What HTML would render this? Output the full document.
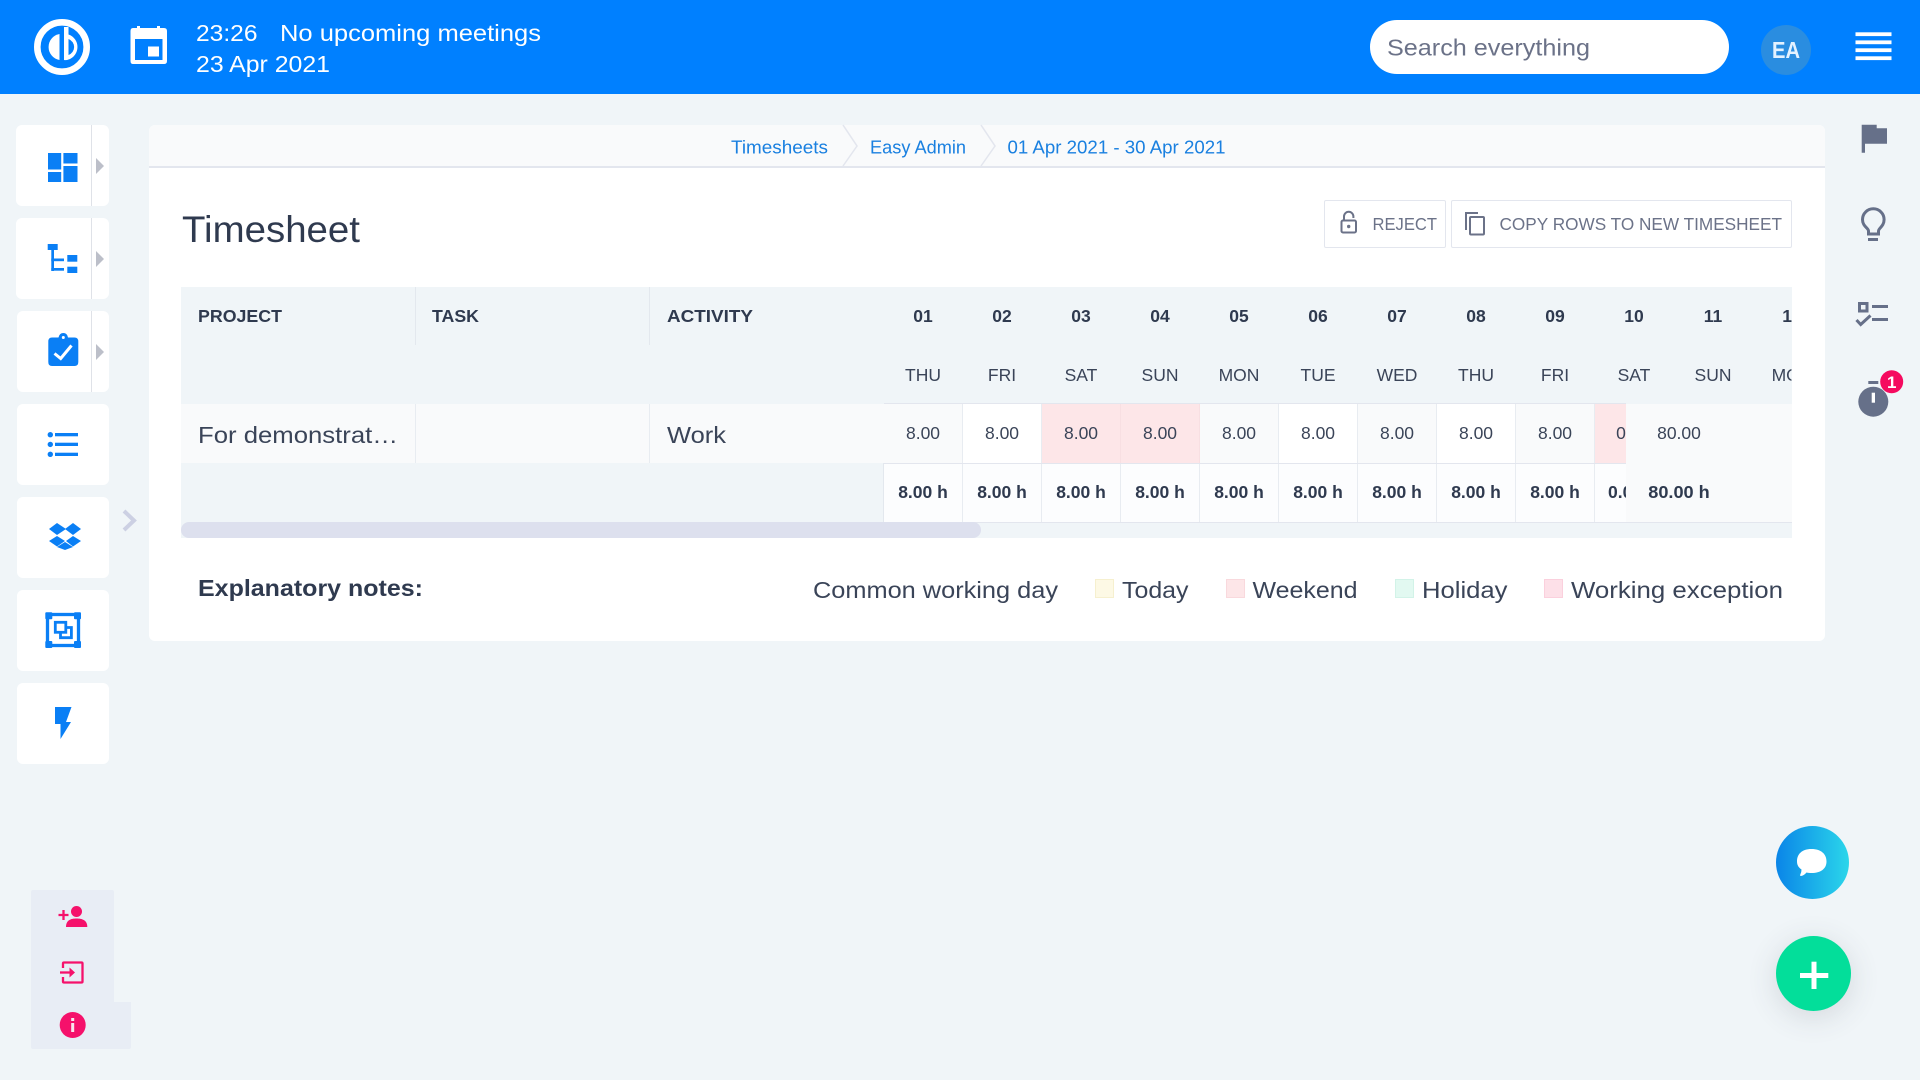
<!DOCTYPE html>
<html lang="en">
<head>
<meta charset="utf-8">
<title>Timesheet</title>
<style>
html,body{margin:0;padding:0;width:1920px;height:1080px;overflow:hidden;background:#f0f5f8;}
.b{position:absolute;box-sizing:border-box;}
svg{position:absolute;left:0;top:0;}
text{font-family:"Liberation Sans",sans-serif;}
.w{fill:#fff;font-size:23.5px;}
.crumb{fill:#1a80e0;font-size:18px;}
.btn{fill:#6b7288;font-size:17.5px;}
.th{fill:#2f3a4f;font-size:17.5px;font-weight:700;}
.dn{fill:#2f3a4f;font-size:17.5px;font-weight:700;text-anchor:middle;}
.dd{fill:#3a4458;font-size:17.5px;text-anchor:middle;}
.v{fill:#3a4458;font-size:17.5px;text-anchor:middle;}
.t{fill:#2f3a4f;font-size:17.5px;font-weight:700;text-anchor:middle;}
.big{fill:#3a4458;font-size:23.5px;}
</style>
</head>
<body>
<!-- Header -->
<div class="b" style="left:0;top:0;width:1920px;height:94px;background:#0080ff;"></div>
<div class="b" style="left:1370px;top:20px;width:359px;height:54px;background:#fff;border-radius:27px;"></div>
<div class="b" style="left:1761px;top:25px;width:50px;height:50px;background:#2a8de0;border-radius:50%;"></div>

<!-- Left tiles -->
<div class="b" style="left:16px;top:125px;width:93px;height:81px;background:#fff;border-radius:6px;"></div>
<div class="b" style="left:16px;top:218px;width:93px;height:81px;background:#fff;border-radius:6px;"></div>
<div class="b" style="left:17px;top:311px;width:92px;height:81px;background:#fff;border-radius:6px;"></div>
<div class="b" style="left:17px;top:404px;width:92px;height:81px;background:#fff;border-radius:6px;"></div>
<div class="b" style="left:17px;top:497px;width:92px;height:81px;background:#fff;border-radius:6px;"></div>
<div class="b" style="left:17px;top:590px;width:92px;height:81px;background:#fff;border-radius:6px;"></div>
<div class="b" style="left:17px;top:683px;width:92px;height:81px;background:#fff;border-radius:6px;"></div>
<div class="b" style="left:91px;top:125px;width:1px;height:81px;background:#dfe2e8;"></div>
<div class="b" style="left:91px;top:218px;width:1px;height:81px;background:#dfe2e8;"></div>
<div class="b" style="left:91px;top:311px;width:1px;height:81px;background:#dfe2e8;"></div>

<!-- Bottom-left panel -->
<div class="b" style="left:31px;top:890px;width:83px;height:112px;background:#e8edf5;border-radius:2px 2px 0 0;"></div>
<div class="b" style="left:31px;top:1002px;width:100px;height:47px;background:#e8edf5;border-radius:0 0 2px 2px;"></div>

<!-- Main card -->
<div class="b" style="left:148.5px;top:125px;width:1676px;height:516px;background:#fff;border-radius:6px;"></div>
<div class="b" style="left:148.5px;top:125px;width:1676px;height:43px;background:#f9fafb;border-bottom:2px solid #e3e6ee;border-radius:6px 6px 0 0;"></div>

<!-- Buttons -->
<div class="b" style="left:1324px;top:200px;width:122px;height:48px;background:#fff;border:1px solid #e3e6ee;border-radius:2px;"></div>
<div class="b" style="left:1451px;top:200px;width:341px;height:48px;background:#fff;border:1px solid #e3e6ee;border-radius:2px;"></div>

<!-- Table -->
<div class="b" style="left:181px;top:287px;width:1611px;height:251px;background:#f0f5f8;"></div>
<div class="b" style="left:181px;top:404px;width:703px;height:59px;background:#f9fafb;"></div>
<div class="b" style="left:415px;top:287px;width:1px;height:58px;background:#e3e8ee;"></div>
<div class="b" style="left:649px;top:287px;width:1px;height:58px;background:#e3e8ee;"></div>
<div class="b" style="left:415px;top:404px;width:1px;height:59px;background:#e8ecf1;"></div>
<div class="b" style="left:649px;top:404px;width:1px;height:59px;background:#e8ecf1;"></div>

<!-- Row cells -->
<div class="b" style="left:884px;top:404px;width:79px;height:59px;background:#f9fafb;border-right:1px solid #e8ecf1;"></div>
<div class="b" style="left:963px;top:404px;width:79px;height:59px;background:#fff;border-right:1px solid #e8ecf1;"></div>
<div class="b" style="left:1042px;top:404px;width:79px;height:59px;background:#fde6e8;border-right:1px solid #f8dfe2;"></div>
<div class="b" style="left:1121px;top:404px;width:79px;height:59px;background:#fde6e8;border-right:1px solid #f8dfe2;"></div>
<div class="b" style="left:1200px;top:404px;width:79px;height:59px;background:#f9fafb;border-right:1px solid #e8ecf1;"></div>
<div class="b" style="left:1279px;top:404px;width:79px;height:59px;background:#fff;border-right:1px solid #e8ecf1;"></div>
<div class="b" style="left:1358px;top:404px;width:79px;height:59px;background:#f9fafb;border-right:1px solid #e8ecf1;"></div>
<div class="b" style="left:1437px;top:404px;width:79px;height:59px;background:#fff;border-right:1px solid #e8ecf1;"></div>
<div class="b" style="left:1516px;top:404px;width:79px;height:59px;background:#f9fafb;border-right:1px solid #e8ecf1;"></div>
<div class="b" style="left:1595px;top:404px;width:31px;height:59px;background:#fde6e8;"></div>
<div class="b" style="left:1626px;top:404px;width:166px;height:59px;background:#f9fafb;"></div>
<!-- Totals -->
<div class="b" style="left:884px;top:463px;width:742px;height:59px;background:#fcfdfe;"></div>
<div class="b" style="left:1626px;top:463px;width:166px;height:59px;background:#f9fafb;"></div>
<div class="b" style="left:883px;top:463px;width:1px;height:59px;background:#e3e8ee;"></div>
<div class="b" style="left:962px;top:463px;width:1px;height:59px;background:#e8ecf1;"></div>
<div class="b" style="left:1041px;top:463px;width:1px;height:59px;background:#e8ecf1;"></div>
<div class="b" style="left:1120px;top:463px;width:1px;height:59px;background:#e8ecf1;"></div>
<div class="b" style="left:1199px;top:463px;width:1px;height:59px;background:#e8ecf1;"></div>
<div class="b" style="left:1278px;top:463px;width:1px;height:59px;background:#e8ecf1;"></div>
<div class="b" style="left:1357px;top:463px;width:1px;height:59px;background:#e8ecf1;"></div>
<div class="b" style="left:1436px;top:463px;width:1px;height:59px;background:#e8ecf1;"></div>
<div class="b" style="left:1515px;top:463px;width:1px;height:59px;background:#e8ecf1;"></div>
<div class="b" style="left:1594px;top:463px;width:1px;height:59px;background:#e8ecf1;"></div>
<div class="b" style="left:884px;top:403px;width:742px;height:1px;background:#e3e6ee;"></div>
<div class="b" style="left:884px;top:463px;width:742px;height:1px;background:#e3e6ee;"></div>
<div class="b" style="left:883px;top:522px;width:909px;height:1px;background:#e3e6ee;"></div>
<!-- Scrollbar -->
<div class="b" style="left:181px;top:522px;width:800px;height:16px;background:#dde0ee;border-radius:8px;"></div>

<!-- Legend swatches -->
<div class="b" style="left:1095px;top:579px;width:19px;height:19px;background:#fdf9e5;border:1px solid #f6f0cf;"></div>
<div class="b" style="left:1226px;top:579px;width:19px;height:19px;background:#fde6e8;border:1px solid #f9d9dd;"></div>
<div class="b" style="left:1395px;top:579px;width:19px;height:19px;background:#e2f9f1;border:1px solid #d2f3e8;"></div>
<div class="b" style="left:1544px;top:579px;width:19px;height:19px;background:#fde0e8;border:1px solid #fbd0dd;"></div>

<!-- FABs -->
<div class="b" style="left:1775.5px;top:825.5px;width:73px;height:73px;border-radius:50%;background:linear-gradient(90deg,#0a85e8,#2bd6ea);"></div>
<div class="b" style="left:1776px;top:936px;width:75px;height:75px;border-radius:50%;background:#03de9a;box-shadow:0 6px 30px rgba(60,70,80,.16);"></div>

<svg width="1920" height="1080" viewBox="0 0 1920 1080" xmlns="http://www.w3.org/2000/svg">
  <!-- Header icons -->
  <circle cx="62" cy="47" r="24.7" fill="none" stroke="#fff" stroke-width="6.6"/>
  <path d="M59.500 34 A13.200 13.200 0 0 0 59.500 60 Z" fill="#fff"/>
  <path d="M64 27 H68.500 V34.500 A13.200 13.200 0 0 1 68.500 59.500 Q66.500 60.500 64 60 Z" fill="#fff"/>
  <path d="M68.500 39 A8.500 8.500 0 0 1 68.500 55 Z" fill="#0080ff"/>
  <path d="M133 28 H137 V26 H140 V28 H157 V26 H160 V28 H164 Q167 28 167 31 V61 Q167 64 164 64 H133 Q130.500 64 130.500 61 V31 Q130.500 28 133 28 Z M135 39 V60 H162.500 V39 Z" fill="#fff" fill-rule="evenodd"/>
  <rect x="148" y="46.500" width="11" height="10" fill="#fff"/>
  <text class="w" x="196" y="41" textLength="61.500" lengthAdjust="spacingAndGlyphs">23:26</text>
  <text class="w" x="280" y="41" textLength="261" lengthAdjust="spacingAndGlyphs">No upcoming meetings</text>
  <text class="w" x="196" y="72" textLength="134" lengthAdjust="spacingAndGlyphs">23 Apr 2021</text>
  <text x="1387" y="55.500" textLength="203" lengthAdjust="spacingAndGlyphs" style="fill:#6b7288;font-size:23.500px">Search everything</text>
  <text x="1772" y="58" textLength="28" lengthAdjust="spacingAndGlyphs" style="fill:#e4f2ff;font-size:23px;font-weight:700">EA</text>
  <rect x="1855.500" y="32.300" width="36" height="3.800" fill="#fff"/>
  <rect x="1855.500" y="40.400" width="36" height="3.800" fill="#fff"/>
  <rect x="1855.500" y="48.300" width="36" height="3.800" fill="#fff"/>
  <rect x="1855.500" y="56.300" width="36" height="3.800" fill="#fff"/>

  <!-- Tile arrows -->
  <path d="M96 158 L104 166 L96 174 Z" fill="#bcbfc9"/>
  <path d="M96 251 L104 259 L96 267 Z" fill="#bcbfc9"/>
  <path d="M96 344 L104 352 L96 360 Z" fill="#bcbfc9"/>

  <!-- Dashboard -->
  <g fill="#0a7ff5">
    <rect x="48" y="153" width="13.200" height="16.500"/>
    <rect x="48" y="172" width="13.200" height="10"/>
    <rect x="63.400" y="153" width="14.100" height="10.500"/>
    <rect x="63.400" y="166" width="14.100" height="16"/>
  </g>
  <!-- Tree -->
  <g fill="#0a7ff5">
    <rect x="47.700" y="244" width="10" height="6"/>
    <rect x="51.300" y="250" width="2.700" height="21"/>
    <rect x="51.300" y="258.500" width="12.700" height="2.700"/>
    <rect x="51.300" y="268" width="12.700" height="2.700"/>
    <rect x="67.300" y="255" width="10" height="6.700"/>
    <rect x="67.300" y="266.700" width="10" height="6.300"/>
  </g>
  <!-- Clipboard -->
  <path d="M52 337.500 H58.500 Q59.500 333 63.300 333 Q67.200 333 68 337.500 H74.500 Q78.300 337.500 78.300 341.500 V362 Q78.300 366 74.500 366 H52 Q48.300 366 48.300 362 V341.500 Q48.300 337.500 52 337.500 Z" fill="#0a7ff5"/>
  <circle cx="63.300" cy="337.500" r="1.500" fill="#fff"/>
  <path d="M54.500 353.500 L60.700 358.500 L71.500 345.500" fill="none" stroke="#fff" stroke-width="3"/>
  <!-- List -->
  <g fill="#0a7ff5">
    <circle cx="50.300" cy="434.700" r="2.700"/><circle cx="50.300" cy="444.400" r="2.700"/><circle cx="50.300" cy="454.300" r="2.700"/>
    <rect x="55" y="433" width="23" height="3.300"/><rect x="55" y="442.700" width="23" height="3.300"/><rect x="55" y="452.700" width="23" height="3.300"/>
  </g>
  <!-- Dropbox -->
  <g fill="#0a7ff5">
    <path d="M57 523 L66 529 L57 535 L49 529 Z"/>
    <path d="M73 523 L81 529 L73 535 L65 529 Z"/>
    <path d="M57 536 L65 541 L57 546.500 L49 541 Z"/>
    <path d="M73 536 L81 541 L73 546.500 L66 541 Z"/>
    <path d="M65 542 L73 547 L65 550 L57 547 Z"/>
  </g>
  <!-- Box select -->
  <g fill="none" stroke="#0a7ff5">
    <rect x="47.500" y="614.500" width="31" height="31" stroke-width="3.300"/>
    <rect x="55.300" y="622.300" width="10.500" height="10" stroke-width="2.800"/>
    <path d="M65.800 627.500 H71.400 V637.700 H60.500 V632.300" stroke-width="2.800"/>
  </g>
  <g fill="#0a7ff5">
    <rect x="45.300" y="612.300" width="7" height="7" rx="1"/><rect x="74" y="612.300" width="7" height="7" rx="1"/>
    <rect x="45.300" y="641" width="7" height="7" rx="1"/><rect x="74" y="641" width="7" height="7" rx="1"/>
  </g>
  <!-- Bolt -->
  <path d="M55 707 H71.500 L66 722 H71 L60.500 739 V724 H55 Z" fill="#0a7ff5"/>
  <!-- Chevron -->
  <path d="M124 511 L134 520.500 L124 530" fill="none" stroke="#ccd0e3" stroke-width="4"/>

  <!-- Breadcrumbs -->
  <path d="M843 125 L857 146 L843 166" fill="none" stroke="#e3e6ee" stroke-width="1.500"/>
  <path d="M981 125 L995 146 L981 166" fill="none" stroke="#e3e6ee" stroke-width="1.500"/>
  <text class="crumb" x="731" y="153.500" textLength="97" lengthAdjust="spacingAndGlyphs">Timesheets</text>
  <text class="crumb" x="870" y="153.500" textLength="96" lengthAdjust="spacingAndGlyphs">Easy Admin</text>
  <text class="crumb" x="1007.500" y="153.500" textLength="218" lengthAdjust="spacingAndGlyphs">01 Apr 2021 - 30 Apr 2021</text>

  <!-- Title -->
  <text x="182" y="242" textLength="178" lengthAdjust="spacingAndGlyphs" style="fill:#2f3a4f;font-size:37px">Timesheet</text>

  <!-- Buttons -->
  <rect x="1341.500" y="220.500" width="14.500" height="12" rx="1.500" fill="none" stroke="#6b7288" stroke-width="2"/>
  <path d="M1344 220.500 V216.500 A4.700 4.700 0 0 1 1353.400 216.500 V218" fill="none" stroke="#6b7288" stroke-width="2"/>
  <circle cx="1348.700" cy="226.500" r="1.700" fill="#6b7288"/>
  <text class="btn" x="1372.500" y="230" textLength="64.500" lengthAdjust="spacingAndGlyphs">REJECT</text>
  <path d="M1466 230 V213 H1478" fill="none" stroke="#6b7288" stroke-width="2"/>
  <rect x="1470" y="217" width="14" height="17.500" rx="1" fill="none" stroke="#6b7288" stroke-width="2"/>
  <text class="btn" x="1499.500" y="230" textLength="282.500" lengthAdjust="spacingAndGlyphs">COPY ROWS TO NEW TIMESHEET</text>

  <!-- Table header -->
  <text class="th" x="198" y="322" textLength="84" lengthAdjust="spacingAndGlyphs">PROJECT</text>
  <text class="th" x="432" y="322" textLength="47" lengthAdjust="spacingAndGlyphs">TASK</text>
  <text class="th" x="667" y="322" textLength="86" lengthAdjust="spacingAndGlyphs">ACTIVITY</text>

  <text class="dn" x="923" y="322">01</text><text class="dn" x="1002" y="322">02</text><text class="dn" x="1081" y="322">03</text><text class="dn" x="1160" y="322">04</text><text class="dn" x="1239" y="322">05</text><text class="dn" x="1318" y="322">06</text><text class="dn" x="1397" y="322">07</text><text class="dn" x="1476" y="322">08</text><text class="dn" x="1555" y="322">09</text><text class="dn" x="1634" y="322">10</text><text class="dn" x="1713" y="322">11</text>
  <text class="dd" x="923" y="381">THU</text><text class="dd" x="1002" y="381">FRI</text><text class="dd" x="1081" y="381">SAT</text><text class="dd" x="1160" y="381">SUN</text><text class="dd" x="1239" y="381">MON</text><text class="dd" x="1318" y="381">TUE</text><text class="dd" x="1397" y="381">WED</text><text class="dd" x="1476" y="381">THU</text><text class="dd" x="1555" y="381">FRI</text><text class="dd" x="1634" y="381">SAT</text><text class="dd" x="1713" y="381">SUN</text>
  <svg x="1770" y="287" width="21.500" height="117" viewBox="1770 287 21.500 117" overflow="hidden">
    <text class="dn" x="1792" y="322">12</text>
    <text class="dd" x="1792" y="381">MON</text>
  </svg>

  <!-- Rows -->
  <text class="big" x="198" y="443" textLength="200" lengthAdjust="spacingAndGlyphs">For demonstrat…</text>
  <text class="big" x="667" y="443" textLength="59" lengthAdjust="spacingAndGlyphs">Work</text>

  <text class="v" x="923" y="439">8.00</text><text class="v" x="1002" y="439">8.00</text><text class="v" x="1081" y="439">8.00</text><text class="v" x="1160" y="439">8.00</text><text class="v" x="1239" y="439">8.00</text><text class="v" x="1318" y="439">8.00</text><text class="v" x="1397" y="439">8.00</text><text class="v" x="1476" y="439">8.00</text><text class="v" x="1555" y="439">8.00</text>
  <svg x="1594" y="404" width="32" height="118" viewBox="1594 404 32 118" overflow="hidden">
    <text class="v" x="1621" y="439">0</text>
    <text x="1608" y="498" style="fill:#2f3a4f;font-size:17.500px;font-weight:700">0.00</text>
  </svg>
  <text class="v" x="1679" y="439">80.00</text>

  <text class="t" x="923" y="498">8.00 h</text><text class="t" x="1002" y="498">8.00 h</text><text class="t" x="1081" y="498">8.00 h</text><text class="t" x="1160" y="498">8.00 h</text><text class="t" x="1239" y="498">8.00 h</text><text class="t" x="1318" y="498">8.00 h</text><text class="t" x="1397" y="498">8.00 h</text><text class="t" x="1476" y="498">8.00 h</text><text class="t" x="1555" y="498">8.00 h</text>
  <text class="t" x="1679" y="498" textLength="61.500" lengthAdjust="spacingAndGlyphs">80.00 h</text>

  <!-- Legend -->
  <text x="198" y="596" textLength="225" lengthAdjust="spacingAndGlyphs" style="fill:#2f3a4f;font-size:23.500px;font-weight:700">Explanatory notes:</text>
  <text class="big" x="813" y="598" textLength="245" lengthAdjust="spacingAndGlyphs">Common working day</text>
  <text class="big" x="1122" y="598" textLength="66.500" lengthAdjust="spacingAndGlyphs">Today</text>
  <text class="big" x="1252.500" y="598" textLength="105" lengthAdjust="spacingAndGlyphs">Weekend</text>
  <text class="big" x="1422" y="598" textLength="85.500" lengthAdjust="spacingAndGlyphs">Holiday</text>
  <text class="big" x="1571" y="598" textLength="212" lengthAdjust="spacingAndGlyphs">Working exception</text>

  <!-- Right rail icons -->
  <path d="M1861.700 124.700 H1876.700 V128.300 H1887 V143.800 H1865 V152.700 H1861.700 Z" fill="#667089"/>
  <path d="M1868.500 234 V231 C1868.500 228 1862.500 226.500 1862.500 219.500 A10.800 10.800 0 0 1 1884.100 219.500 C1884.100 226.500 1878.500 228 1878.500 231 V234 Z" fill="none" stroke="#667089" stroke-width="3"/>
  <rect x="1868" y="238" width="10" height="3" fill="#667089"/>
  <rect x="1859.500" y="303.500" width="7.500" height="7.500" fill="none" stroke="#667089" stroke-width="3"/>
  <rect x="1872" y="305" width="16" height="3" fill="#667089"/>
  <rect x="1872" y="318" width="16" height="3" fill="#667089"/>
  <path d="M1856.500 320 L1860.700 324.500 L1870.500 315.500" fill="none" stroke="#667089" stroke-width="3"/>
  <circle cx="1873.300" cy="401.700" r="15" fill="#667089"/>
  <rect x="1868.300" y="381" width="10" height="3" fill="#667089"/>
  <rect x="1871.700" y="392.700" width="3.300" height="10" fill="#fff"/>
  <circle cx="1891.700" cy="381.700" r="11.500" fill="#f50a5f"/>
  <text x="1891.700" y="388" text-anchor="middle" style="fill:#fff;font-size:17px;font-weight:700">1</text>

  <!-- Bottom-left icons -->
  <circle cx="76.500" cy="911.500" r="5.500" fill="#f5116b"/>
  <path d="M66 927 C66 920 71 918.500 76.500 918.500 C82 918.500 87.300 920 87.300 927 Z" fill="#f5116b"/>
  <path d="M58.500 915 H68.500 M63.500 910 V920" stroke="#f5116b" stroke-width="2.300" fill="none"/>
  <path d="M63 968 V963.500 Q63 962.500 64 962.500 H81.500 Q82.500 962.500 82.500 963.500 V981.500 Q82.500 982.500 81.500 982.500 H64 Q63 982.500 63 981.500 V977" fill="none" stroke="#f5116b" stroke-width="2.300"/>
  <path d="M60 972.500 H72" stroke="#f5116b" stroke-width="2.300"/>
  <path d="M69.500 967.500 L75 972.500 L69.500 977.500 Z" fill="#f5116b"/>
  <circle cx="72.700" cy="1025" r="13" fill="#f5116b"/>
  <rect x="71.200" y="1023" width="3" height="9" fill="#f8e6ee"/>
  <rect x="71.200" y="1018" width="3" height="3" fill="#f8e6ee"/>

  <!-- FAB icons -->
  <path d="M1811.500 849 C1821 849 1826.500 854 1826.500 861.500 C1826.500 869 1820.500 873 1811.500 873 C1809.500 873 1808 872.800 1806.500 872.500 Q1804 875.500 1801 876 Q1799.500 876 1800.500 874 Q1801.500 872 1801.500 869.500 C1798.500 867.500 1797 865 1797 861.500 C1797 854 1802 849 1811.500 849 Z" fill="#fff"/>
  <rect x="1800" y="973" width="28.300" height="5" fill="#fff"/>
  <rect x="1811.500" y="961.700" width="5" height="27.300" fill="#fff"/>
</svg>
</body>
</html>
